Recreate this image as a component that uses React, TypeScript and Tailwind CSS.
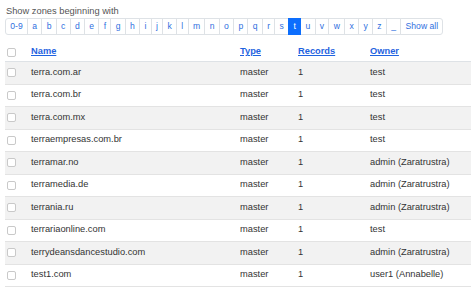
const letters = ['0-9', 'a', 'b', 'c', 'd', 'e', 'f', 'g', 'h', 'i', 'j', 'k', 'l', 'm', 'n', 'o', 'p', 'q', 'r', 's', 't', 'u', 'v', 'w', 'x', 'y', 'z', '_', 'Show all'];

const zones = [
  { name: 'terra.com.ar', owner: 'test' },
  { name: 'terra.com.br', owner: 'test' },
  { name: 'terra.com.mx', owner: 'test' },
  { name: 'terraempresas.com.br', owner: 'test' },
  { name: 'terramar.no', owner: 'admin (Zaratrustra)' },
  { name: 'terramedia.de', owner: 'admin (Zaratrustra)' },
  { name: 'terrania.ru', owner: 'admin (Zaratrustra)' },
  { name: 'terrariaonline.com', owner: 'test' },
  { name: 'terrydeansdancestudio.com', owner: 'admin (Zaratrustra)' },
  { name: 'test1.com', owner: 'user1 (Annabelle)' },
];

function Checkbox() {
  return <span className="block w-[9px] h-[9px] rounded-[2px] border border-[#c9c9c9] bg-white" />;
}

export default function App() {
  return (
    <div className="w-[474px] h-[296px] overflow-hidden bg-white pl-[5px] pr-[3px] font-['Liberation_Sans',Arial,sans-serif]">
      <div className="pt-[5px] pl-[1px] text-[9.3px] leading-[12px] text-[#555]">Show zones beginning with</div>

      {/* letter pager */}
      <div className="mt-[1px] flex h-[17px]">
        {letters.map((l, i) => {
          const active = l === 't';
          return (
            <span
              key={l}
              className={
                'flex items-center px-[4.3px] text-[8.6px] border ' +
                (i > 0 ? '-ml-px ' : 'rounded-l-[3px] ') +
                (i === letters.length - 1 ? 'rounded-r-[3px] ' : '') +
                (active
                  ? 'relative bg-[#0d6efd] border-[#0d6efd] text-white'
                  : 'border-[#dee2e6] text-[#2f6fe0] bg-white')
              }
            >
              {l}
            </span>
          );
        })}
      </div>

      {/* zones table */}
      <div className="mt-[8px] text-[9.3px] text-[#333]">
        <div className="grid grid-cols-[26px_209px_58px_72px_1fr] items-center h-[19px] border-b border-[#dee2e6]">
          <div className="pl-[2px]">
            <Checkbox />
          </div>
          <a className="font-bold text-[#1f63e0] underline">Name</a>
          <a className="font-bold text-[#1f63e0] underline">Type</a>
          <a className="font-bold text-[#1f63e0] underline">Records</a>
          <a className="font-bold text-[#1f63e0] underline">Owner</a>
        </div>
        {zones.map((z, i) => (
          <div
            key={z.name}
            className={
              'grid grid-cols-[26px_209px_58px_72px_1fr] items-center h-[22.5px] border-b border-[#e3e3e3] ' +
              (i % 2 === 0 ? 'bg-[#f2f2f2]' : 'bg-white')
            }
          >
            <div className="pl-[2px]">
              <Checkbox />
            </div>
            <div>{z.name}</div>
            <div>master</div>
            <div>1</div>
            <div>{z.owner}</div>
          </div>
        ))}
      </div>
    </div>
  );
}
